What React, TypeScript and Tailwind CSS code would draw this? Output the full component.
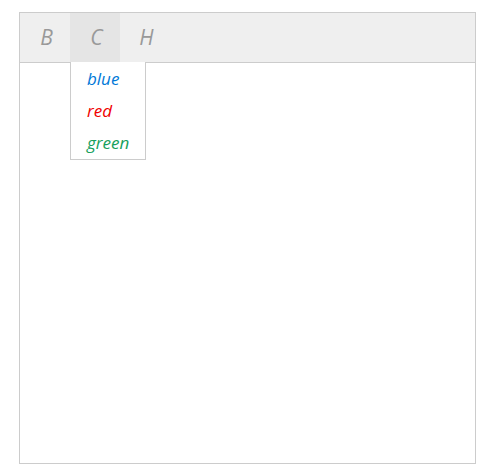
import React from "react";

const options = [
  { label: "blue", className: "text-[#0078d7]" },
  { label: "red", className: "text-[#f00000]" },
  { label: "green", className: "text-[#16a05c]" },
];

const App = () => {
  return (
    <div className="pl-[19px] pt-[12px] font-['Open_Sans',sans-serif]">
      <div className="h-[452px] w-[457px] border border-[#cccccc] bg-white">
        <div className="flex h-[50px] border-b border-[#cccccc] bg-[#efefef]">
          <button className="flex h-[49px] w-[50px] items-center justify-center pl-[3px] text-[21px] italic text-[#999999]">
            B
          </button>
          <div className="relative">
            <button className="flex h-[49px] w-[50px] items-center justify-center bg-[#e5e5e5] pl-[3px] text-[21px] italic text-[#999999]">
              C
            </button>
            <ul className="absolute left-0 top-full z-10 w-[76px] border-x border-b border-[#cccccc] bg-white pt-[1px]">
              {options.map((o) => (
                <li
                  key={o.label}
                  className={`flex h-[32px] items-center pl-[16px] text-[17px] italic ${o.className}`}
                >
                  {o.label}
                </li>
              ))}
            </ul>
          </div>
          <button className="flex h-[49px] w-[50px] items-center justify-center pl-[3px] text-[21px] italic text-[#999999]">
            H
          </button>
        </div>
      </div>
    </div>
  );
};

export default App;
